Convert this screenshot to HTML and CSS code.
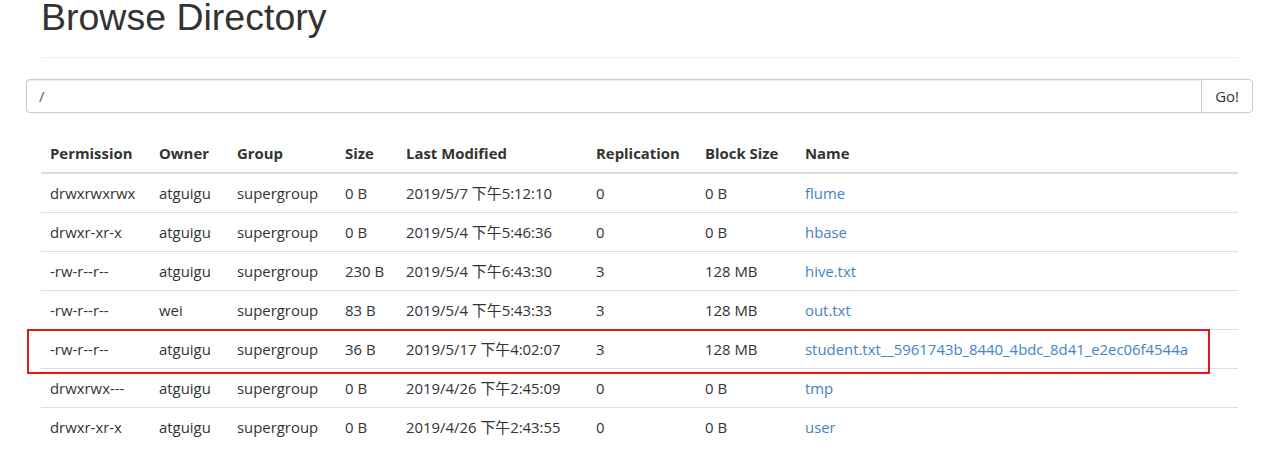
FILE: index.html
```html
<!DOCTYPE html>
<html lang="zh">
<head>
<meta charset="utf-8">
<title>Browse Directory</title>
<link rel="stylesheet" href="styles.css">
</head>
<body>
<div class="container">
  <div class="page-header">
    <h1>Browse Directory</h1>
  </div>
  <div class="input-group">
    <input class="path" type="text" value="/">
    <button class="go" type="button">Go!</button>
  </div>
  <div class="table-wrap">
    <table class="table">
      <colgroup>
        <col class="c1"><col class="c2"><col class="c3"><col class="c4"><col class="c5"><col class="c6"><col class="c7"><col class="c8">
      </colgroup>
      <thead>
        <tr><th>Permission</th><th>Owner</th><th>Group</th><th>Size</th><th>Last Modified</th><th>Replication</th><th>Block Size</th><th>Name</th></tr>
      </thead>
      <tbody>
        <tr><td>drwxrwxrwx</td><td>atguigu</td><td>supergroup</td><td>0 B</td><td>2019/5/7 下午5:12:10</td><td>0</td><td>0 B</td><td><a href="#">flume</a></td></tr>
        <tr><td>drwxr-xr-x</td><td>atguigu</td><td>supergroup</td><td>0 B</td><td>2019/5/4 下午5:46:36</td><td>0</td><td>0 B</td><td><a href="#">hbase</a></td></tr>
        <tr><td>-rw-r--r--</td><td>atguigu</td><td>supergroup</td><td>230 B</td><td>2019/5/4 下午6:43:30</td><td>3</td><td>128 MB</td><td><a href="#">hive.txt</a></td></tr>
        <tr><td>-rw-r--r--</td><td>wei</td><td>supergroup</td><td>83 B</td><td>2019/5/4 下午5:43:33</td><td>3</td><td>128 MB</td><td><a href="#">out.txt</a></td></tr>
        <tr><td>-rw-r--r--</td><td>atguigu</td><td>supergroup</td><td>36 B</td><td>2019/5/17 下午4:02:07</td><td>3</td><td>128 MB</td><td><a href="#">student.txt__5961743b_8440_4bdc_8d41_e2ec06f4544a</a></td></tr>
        <tr><td>drwxrwx---</td><td>atguigu</td><td>supergroup</td><td>0 B</td><td>2019/4/26 下午2:45:09</td><td>0</td><td>0 B</td><td><a href="#">tmp</a></td></tr>
        <tr><td>drwxr-xr-x</td><td>atguigu</td><td>supergroup</td><td>0 B</td><td>2019/4/26 下午2:43:55</td><td>0</td><td>0 B</td><td><a href="#">user</a></td></tr>
      </tbody>
    </table>
    <div class="highlight"></div>
  </div>
</div>
</body>
</html>
```

FILE: styles.css
```css
* { box-sizing: border-box; }

html, body {
  margin: 0;
  padding: 0;
  background: #fff;
}

body {
  font-family: "Open Sans", "Noto Sans CJK SC", sans-serif;
  font-size: 14.9px;
  color: #333;
}

.container {
  padding: 0 42px 0 41px;
}

.page-header {
  margin: 0 0 21px;
  padding-bottom: 22px;
  border-bottom: 1px solid #eee;
}

.page-header h1 {
  margin: 0;
  font-family: "Liberation Sans", Arial, sans-serif;
  font-weight: 400;
  font-size: 37.5px;
  line-height: 35px;
  color: #333;
}

.input-group {
  display: flex;
  margin: 0 -15px;
  height: 34px;
}

.path {
  flex: 1;
  height: 34px;
  margin: 0;
  padding: 6px 12px;
  border: 1px solid #ccc;
  border-right: 0;
  border-radius: 4px 0 0 4px;
  font-family: inherit;
  font-size: 14.9px;
  color: #555;
  box-shadow: inset 0 1px 1px rgba(0,0,0,.075);
  outline: none;
}

.go {
  width: 52px;
  height: 34px;
  margin: 0;
  padding: 6px 11px;
  border: 1px solid #ccc;
  border-radius: 0 4px 4px 0;
  background: #fff;
  font-family: inherit;
  font-size: 14.9px;
  color: #333;
}

.table-wrap {
  position: relative;
  margin-top: 21px;
}

.table {
  width: 100%;
  border-collapse: collapse;
  table-layout: fixed;
}

.c1 { width: 109px; }
.c2 { width: 78px; }
.c3 { width: 108px; }
.c4 { width: 61px; }
.c5 { width: 190px; }
.c6 { width: 109px; }
.c7 { width: 100px; }
.c8 { width: auto; }

.table th,
.table td {
  padding: 8px 8px 8px 9px;
  line-height: 22px;
  text-align: left;
  vertical-align: top;
  white-space: nowrap;
}

.table th {
  font-weight: 700;
  border-bottom: 2px solid #ddd;
}

.table td {
  border-top: 1px solid #ddd;
}

.table tbody tr:first-child td {
  border-top: 0;
}

.table a {
  color: #4383c6;
  text-decoration: none;
}

.highlight {
  position: absolute;
  left: -14px;
  top: 195px;
  width: 1183px;
  height: 45px;
  border: 2px solid #e8141c;
  pointer-events: none;
}
```
